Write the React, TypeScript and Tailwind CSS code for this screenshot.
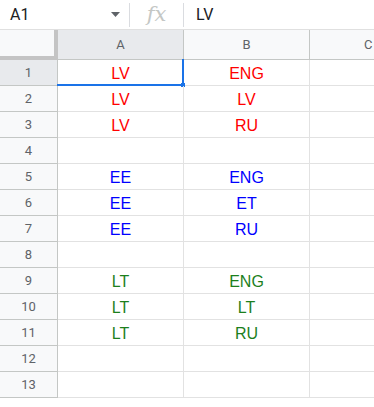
const rows: { a: string; b: string; color: string }[] = [
  { a: 'LV', b: 'ENG', color: 'text-[#ff0000]' },
  { a: 'LV', b: 'LV', color: 'text-[#ff0000]' },
  { a: 'LV', b: 'RU', color: 'text-[#ff0000]' },
  { a: '', b: '', color: '' },
  { a: 'EE', b: 'ENG', color: 'text-[#0000ff]' },
  { a: 'EE', b: 'ET', color: 'text-[#0000ff]' },
  { a: 'EE', b: 'RU', color: 'text-[#0000ff]' },
  { a: '', b: '', color: '' },
  { a: 'LT', b: 'ENG', color: 'text-[#1c7f1c]' },
  { a: 'LT', b: 'LT', color: 'text-[#1c7f1c]' },
  { a: 'LT', b: 'RU', color: 'text-[#1c7f1c]' },
  { a: '', b: '', color: '' },
  { a: '', b: '', color: '' },
]

const App = () => {
  return (
    <div className="h-[407px] w-[374px] overflow-hidden bg-white font-['Roboto',sans-serif]">
      {/* Formula bar */}
      <div className="flex h-[30px] items-center border-b border-[#e0e0e0]">
        <div className="flex h-full w-[129px] items-center pl-[10px] pr-[9px]">
          <span className="flex-1 text-[16px] text-[#202124]">A1</span>
          <svg width="9" height="5" viewBox="0 0 9 5">
            <path d="M0 0h9L4.5 5z" fill="#5f6368" />
          </svg>
        </div>
        <div className="h-[24px] w-px bg-[#dadce0]" />
        <div className="flex w-[53px] justify-center">
          <span className="font-['DejaVu_Serif',serif] text-[21px] italic leading-none text-[#c4c7c5]">fx</span>
        </div>
        <div className="h-[24px] w-px bg-[#dadce0]" />
        <span className="pl-[12px] text-[16px] text-[#202124]">LV</span>
      </div>

      {/* Column headers */}
      <div className="flex h-[30px]">
        <div className="w-[58px] border-b-4 border-r-4 border-[#c4c4c4] bg-[#f8f9fa]" />
        <div className="flex w-[126px] items-center justify-center border-b border-r border-[#c4c7c5] bg-[#e8eaed] text-[13px] text-[#5f6368]">
          A
        </div>
        <div className="flex w-[126px] items-center justify-center border-b border-r border-[#c4c7c5] bg-[#f8f9fa] text-[13px] text-[#5f6368]">
          B
        </div>
        <div className="flex flex-1 items-center border-b border-[#c4c7c5] bg-[#f8f9fa] pl-[54px] text-[13px] text-[#5f6368]">
          C
        </div>
      </div>

      {/* Grid */}
      {rows.map((row, i) => (
        <div key={i} className="flex h-[26px]">
          <div
            className={`flex w-[58px] items-center justify-center border-b border-r border-[#c4c7c5] text-[13px] text-[#5f6368] ${
              i === 0 ? 'bg-[#e8eaed]' : 'bg-[#f8f9fa]'
            }`}
          >
            {i + 1}
          </div>
          <div
            className={`relative flex w-[126px] items-center justify-center border-b border-r border-[#e2e2e2] pt-[3px] font-['Liberation_Sans',Arial,sans-serif] text-[16px] ${row.color}`}
          >
            {row.a}
            {i === 0 && (
              <>
                <div className="absolute -bottom-[1px] -left-[1px] -right-[1px] h-[2px] bg-[#1a73e8]" />
                <div className="absolute -bottom-[1px] -right-[1px] -top-[1px] w-[2px] bg-[#1a73e8]" />
                <div className="absolute -bottom-[2px] -right-[2px] h-[4px] w-[4px] bg-[#1a73e8]" />
              </>
            )}
          </div>
          <div
            className={`flex w-[126px] items-center justify-center border-b border-r border-[#e2e2e2] pt-[3px] font-['Liberation_Sans',Arial,sans-serif] text-[16px] ${row.color}`}
          >
            {row.b}
          </div>
          <div className="flex-1 border-b border-[#e2e2e2]" />
        </div>
      ))}
    </div>
  )
}

export default App
